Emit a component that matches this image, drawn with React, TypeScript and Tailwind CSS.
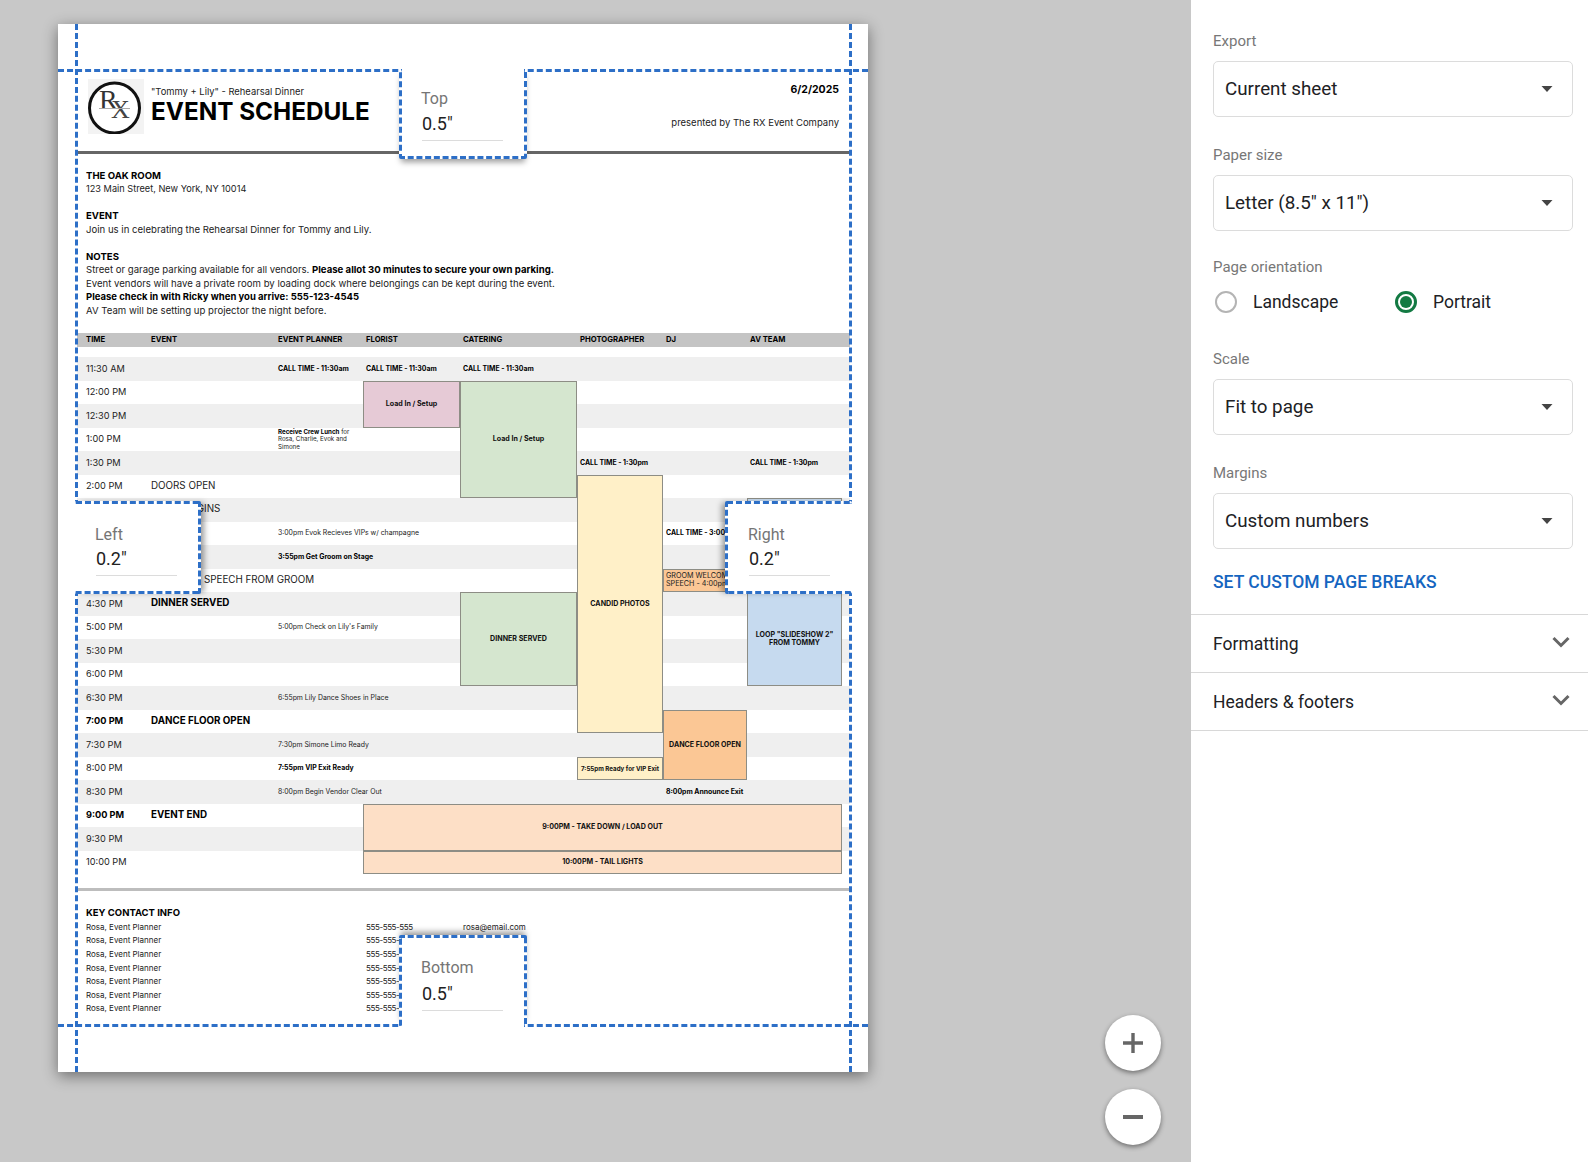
import { ReactNode } from "react";

// rows whose time label sits behind the Left margin box are left empty
const bands = [
  "11:30 AM", "12:00 PM", "12:30 PM", "1:00 PM", "1:30 PM", "2:00 PM", "", "", "", "", "4:30 PM",
  "5:00 PM", "5:30 PM", "6:00 PM", "6:30 PM", "7:00 PM", "7:30 PM", "8:00 PM", "8:30 PM", "9:00 PM", "9:30 PM", "10:00 PM",
];
const boldTimes = ["7:00 PM", "9:00 PM"];

const columns = ["TIME", "EVENT", "EVENT PLANNER", "FLORIST", "CATERING", "PHOTOGRAPHER", "DJ", "AV TEAM"];

// col is 1-based, rows are indexes into bands (end exclusive)
const events = [
  { row: 5, text: "DOORS OPEN", bold: false },
  { row: 6, text: "SHOW BEGINS", bold: false },
  { row: 9, text: "WELCOME SPEECH FROM GROOM", bold: false },
  { row: 10, text: "DINNER SERVED", bold: true },
  { row: 15, text: "DANCE FLOOR OPEN", bold: true },
  { row: 19, text: "EVENT END", bold: true },
];

const notes = [
  { row: 0, col: 3, text: "CALL TIME - 11:30am", bold: true },
  { row: 0, col: 4, text: "CALL TIME - 11:30am", bold: true },
  { row: 0, col: 5, text: "CALL TIME - 11:30am", bold: true },
  { row: 4, col: 6, text: "CALL TIME - 1:30pm", bold: true },
  { row: 4, col: 8, text: "CALL TIME - 1:30pm", bold: true },
  { row: 7, col: 3, text: "3:00pm Evok Recieves VIPs w/ champagne", bold: false },
  { row: 7, col: 7, text: "CALL TIME - 3:00pm", bold: true },
  { row: 8, col: 3, text: "3:55pm Get Groom on Stage", bold: true },
  { row: 11, col: 3, text: "5:00pm Check on Lily's Family", bold: false },
  { row: 14, col: 3, text: "6:55pm Lily Dance Shoes in Place", bold: false },
  { row: 16, col: 3, text: "7:30pm Simone Limo Ready", bold: false },
  { row: 17, col: 3, text: "7:55pm VIP Exit Ready", bold: true },
  { row: 18, col: 3, text: "8:00pm Begin Vendor Clear Out", bold: false },
  { row: 18, col: 7, text: "8:00pm Announce Exit", bold: true },
];

const blocks = [
  { col: 4, span: 1, from: 1, to: 3, bg: "bg-[#e6cad6]", text: "Load In / Setup" },
  { col: 5, span: 1, from: 1, to: 6, bg: "bg-[#d5e6cf]", text: "Load In / Setup" },
  { col: 5, span: 1, from: 10, to: 14, bg: "bg-[#d5e6cf]", text: "DINNER SERVED" },
  { col: 6, span: 1, from: 5, to: 16, bg: "bg-[#fff0c8]", text: "CANDID PHOTOS" },
  { col: 6, span: 1, from: 17, to: 18, bg: "bg-[#fff0c8]", text: "7:55pm Ready for VIP Exit", tiny: true },
  { col: 7, span: 1, from: 15, to: 18, bg: "bg-[#fbc795]", text: "DANCE FLOOR OPEN" },
  { col: 8, span: 1, from: 6, to: 10, bg: "bg-[#c6daef]", text: "" },
  { col: 8, span: 1, from: 10, to: 14, bg: "bg-[#c6daef]", text: 'LOOP "SLIDESHOW 2"\nFROM TOMMY' },
  { col: 4, span: 5, from: 19, to: 21, bg: "bg-[#fddfc6]", text: "9:00PM - TAKE DOWN / LOAD OUT" },
  { col: 4, span: 5, from: 21, to: 22, bg: "bg-[#fddfc6]", text: "10:00PM - TAIL LIGHTS" },
];

function Logo() {
  return (
    <div className="w-[56px] h-[55px] bg-[#f3f3f3] shrink-0">
      <svg width="56" height="55" viewBox="0 0 56 55">
        <circle cx="26.5" cy="29" r="25" fill="white" stroke="#111" strokeWidth="3" />
        <text x="11" y="30" fontFamily="Liberation Serif" fontSize="28" fill="#333">R</text>
        <text x="23" y="39" fontFamily="Liberation Serif" fontSize="26" fill="#444">X</text>
        <rect x="11" y="29" width="31" height="1" fill="#aaa" />
      </svg>
    </div>
  );
}

function MarginBox({ label, value, className, inner, valueGap }: { label: string; value: string; className: string; inner: string; valueGap: string }) {
  return (
    <div className={`absolute z-20 bg-white border-dashed border-[#2d6fc7] rounded-[2px] font-[Roboto,sans-serif] ${className}`}>
      <div className={`flex flex-col ${inner}`}>
        <span className="text-[16px] leading-[20px] text-[#757575]">{label}</span>
        <span className={`text-[18px] leading-[22px] pl-[1px] text-[#222] ${valueGap}`}>{value}</span>
        <div className="w-[81px] ml-[1px] mt-[5px] border-b border-[#dcdcdc]" />
      </div>
    </div>
  );
}

function Caret() {
  return (
    <svg width="12" height="6" viewBox="0 0 12 6" className="shrink-0">
      <polygon points="0.5,0 11.5,0 6,6" fill="#444" />
    </svg>
  );
}

function Field({ label, value, className }: { label: string; value: string; className: string }) {
  return (
    <div className={className}>
      <div className="text-[15px] leading-[20px] text-[#777]">{label}</div>
      <div className="mt-[10px] mr-[15px] h-[56px] flex items-center justify-between pl-[11px] pr-[19px] border-[1.5px] border-[#dcdcdc] rounded-[5px]">
        <span className="text-[18.8px] text-[#202124]">{value}</span>
        <Caret />
      </div>
    </div>
  );
}

function Radio({ label, checked, className }: { label: string; checked?: boolean; className: string }) {
  return (
    <div className={`flex items-center gap-[16px] ${className}`}>
      {checked ? (
        <span className="w-[22px] h-[22px] rounded-full border-[3px] border-[#137a43] flex items-center justify-center">
          <span className="w-[12px] h-[12px] rounded-full bg-[#137a43]" />
        </span>
      ) : (
        <span className="w-[22px] h-[22px] rounded-full border-[2px] border-[#b4b4b4]" />
      )}
      <span className="text-[17.5px] text-[#202124]">{label}</span>
    </div>
  );
}

function Row({ label }: { label: string }) {
  return (
    <div className="h-[58px] pl-[22px] pr-[18px] flex items-center justify-between border-b-[1.5px] border-[#d8d8d8]">
      <span className="text-[17.5px] text-[#202124] pt-[1px]">{label}</span>
      <svg width="18" height="12" viewBox="0 0 18 12" fill="none" stroke="#666" strokeWidth="3" className="mb-[3px]">
        <path d="M1.5 2 L9 9.5 L16.5 2" />
      </svg>
    </div>
  );
}

function InfoLine({ children, bold }: { children: ReactNode; bold?: boolean }) {
  return <div className={`h-[13.4px] leading-[13.4px] ${bold ? "font-bold text-black" : ""}`}>{children}</div>;
}

function Schedule() {
  return (
    <div className="grid grid-cols-[71px_127px_88px_97px_117px_86px_84px_95px_8px] grid-rows-[repeat(22,23.5px)] mt-[10.5px] text-[#222]">
      {bands.map((t, i) => (
        <div
          key={i}
          className={`col-span-9 col-start-1 flex items-center pl-[9px] text-[9.2px] whitespace-nowrap ${i % 2 === 0 ? "bg-[#efefef]" : ""} ${boldTimes.includes(t) ? "font-bold text-black" : ""}`}
          style={{ gridRow: i + 1 }}
        >
          {t}
        </div>
      ))}
      {events.map((e) => (
        <div
          key={e.text}
          className={`col-start-2 flex items-center pl-[3px] text-[9.8px] whitespace-nowrap ${e.bold ? "font-bold text-black" : ""}`}
          style={{ gridRow: e.row + 1 }}
        >
          {e.text}
        </div>
      ))}
      {notes.map((n) => (
        <div
          key={`${n.row}-${n.col}`}
          className={`flex items-center pl-[3px] text-[6.9px] whitespace-nowrap ${n.bold ? "font-bold text-black" : ""}`}
          style={{ gridRow: n.row + 1, gridColumn: n.col }}
        >
          {n.text}
        </div>
      ))}
      <div className="col-start-3 flex items-center pl-[3px] text-[6.2px] leading-[7.6px] w-[88px]" style={{ gridRow: 4 }}>
        <span>
          <b className="text-black">Receive Crew Lunch</b> for Rosa, Charlie, Evok and Simone
        </span>
      </div>
      <div className="col-start-7 z-10 flex flex-col justify-center bg-[#fbc795] border border-[#8d8d85] pl-[2px] text-[7.2px] leading-[8px] whitespace-nowrap overflow-hidden" style={{ gridRow: 10 }}>
        <span>GROOM WELCOME</span>
        <span>SPEECH - 4:00pm</span>
      </div>
      {blocks.map((b) => (
        <div
          key={`${b.col}-${b.from}`}
          className={`z-10 flex items-center justify-center text-center font-bold text-[#111] border border-[#8d8d85] whitespace-pre-line ${b.bg} ${b.tiny ? "text-[6.2px]" : "text-[7.1px] leading-[8px]"}`}
          style={{ gridRow: `${b.from + 1} / ${b.to + 1}`, gridColumn: `${b.col} / span ${b.span}` }}
        >
          {b.text}
        </div>
      ))}
    </div>
  );
}

export default function App() {
  return (
    <div className="w-[1588px] h-[1162px] flex overflow-hidden bg-[#c8c8c8] font-[Inter,sans-serif]">
      <main className="relative w-[1191px] pl-[58px] pt-[24px]">
        {/* Sheet preview */}
        <div className="relative w-[810px] h-[1048px] bg-white shadow-[0_4px_14px_rgba(0,0,0,0.45)] overflow-hidden">
          <div className="pl-[19px] pr-[18px] pt-[55px]">
            <div className="flex h-[71.5px] border-b-[3px] border-[#666] box-content pl-[11px] pr-[11px]">
              <Logo />
              <div className="ml-[7px] flex flex-col">
                <span className="mt-[6px] text-[9.4px] leading-[14px] text-[#222]">"Tommy + Lily" - Rehearsal Dinner</span>
                <span className="text-[24.3px] leading-[25px] font-bold text-black">EVENT SCHEDULE</span>
              </div>
              <div className="ml-auto flex flex-col items-end">
                <span className="mt-[4px] text-[10.5px] leading-[14px] font-bold text-black">6/2/2025</span>
                <span className="mt-[19px] text-[9.5px] leading-[14px] text-[#222]">presented by The RX Event Company</span>
              </div>
            </div>

            <div className="pl-[9px] pt-[15px] text-[9.6px] text-[#222]">
              <InfoLine bold>THE OAK ROOM</InfoLine>
              <InfoLine><span className="text-[9.2px]">123 Main Street, New York, NY 10014</span></InfoLine>
              <div className="h-[14px]" />
              <InfoLine bold>EVENT</InfoLine>
              <InfoLine>Join us in celebrating the Rehearsal Dinner for Tommy and Lily.</InfoLine>
              <div className="h-[14px]" />
              <InfoLine bold>NOTES</InfoLine>
              <InfoLine>
                Street or garage parking available for all vendors. <b className="text-black">Please allot 30 minutes to secure your own parking.</b>
              </InfoLine>
              <InfoLine>Event vendors will have a private room by loading dock where belongings can be kept during the event.</InfoLine>
              <InfoLine bold><span className="text-[9.5px]">Please check in with Ricky when you arrive: 555-123-4545</span></InfoLine>
              <InfoLine>AV Team will be setting up projector the night before.</InfoLine>
            </div>

            <div className="mt-[15.5px] h-[14px] bg-[#c4c4c4] grid grid-cols-[71px_127px_88px_97px_117px_86px_84px_95px_8px] items-center text-[7.7px] font-bold text-black">
              {columns.map((c, i) => (
                <span key={c} className={i === 0 ? "pl-[9px]" : "pl-[3px] whitespace-nowrap"}>{c}</span>
              ))}
            </div>

            <Schedule />

            <div className="mt-[13.5px] border-b-[3px] border-[#bdbdbd]" />

            <div className="pl-[9px] pt-[15px] text-[8px] text-[#222]">
              <div className="text-[9.5px] leading-[13px] font-bold text-black">KEY CONTACT INFO</div>
              <div className="mt-[1.5px]">
                {[0, 1, 2, 3, 4, 5, 6].map((i) => (
                  <div key={i} className="h-[13.6px] flex items-center">
                    <span className="w-[280px]">Rosa, Event Planner</span>
                    <span className="w-[97px] tracking-[-0.4px]">555-555-555</span>
                    {i === 0 && <span>rosa@email.com</span>}
                  </div>
                ))}
              </div>
            </div>
          </div>

          {/* margin guides */}
          <div className="absolute left-0 top-[45px] w-full border-t-[3px] border-dashed border-[#2d6fc7]" />
          <div className="absolute left-0 top-[1000px] w-full border-t-[3px] border-dashed border-[#2d6fc7]" />
          <div className="absolute left-[17px] top-0 h-full border-l-[3px] border-dashed border-[#2d6fc7]" />
          <div className="absolute left-[791px] top-0 h-full border-l-[3px] border-dashed border-[#2d6fc7]" />

          <MarginBox label="Top" value='0.5"' valueGap="mt-[4px]" className="left-[341px] top-[45px] w-[128px] h-[90px] border-x-[3px] border-b-[3px] shadow-[0_5px_6px_-2px_rgba(0,0,0,0.4)]" inner="pl-[19px] pt-[20px]" />
          <MarginBox label="Bottom" value='0.5"' valueGap="mt-[5px]" className="left-[341px] top-[911px] w-[128px] h-[92px] border-x-[3px] border-t-[3px] shadow-[0_-5px_6px_-2px_rgba(0,0,0,0.4)]" inner="pl-[19px] pt-[20px]" />
          <MarginBox label="Left" value='0.2"' valueGap="mt-[3px]" className="left-[16px] top-[477px] w-[127px] h-[93px] border-y-[3px] border-r-[3px] shadow-[5px_0_6px_-2px_rgba(0,0,0,0.4)]" inner="pl-[21px] pt-[21px]" />
          <MarginBox label="Right" value='0.2"' valueGap="mt-[3px]" className="left-[667px] top-[477px] w-[127px] h-[93px] border-y-[3px] border-l-[3px] shadow-[-5px_0_6px_-2px_rgba(0,0,0,0.4)]" inner="pl-[20px] pt-[21px]" />
        </div>

        {/* zoom buttons */}
        <div className="absolute left-[1105px] top-[1015px] flex flex-col gap-[18px]">
          <button className="w-[56px] h-[56px] rounded-full bg-white shadow-[0_2px_5px_rgba(0,0,0,0.45)] flex items-center justify-center">
            <svg width="20" height="20" viewBox="0 0 20 20" fill="#666"><path d="M8.3 0h3.4v8.3H20v3.4h-8.3V20H8.3v-8.3H0V8.3h8.3z" /></svg>
          </button>
          <button className="w-[56px] h-[56px] rounded-full bg-white shadow-[0_2px_5px_rgba(0,0,0,0.45)] flex items-center justify-center">
            <svg width="20" height="4" viewBox="0 0 20 4" fill="#666"><rect width="20" height="4" /></svg>
          </button>
        </div>
      </main>

      <aside className="w-[397px] h-full bg-white font-[Roboto,sans-serif]">
        <div className="pl-[22px] pt-[31px]">
          <Field label="Export" value="Current sheet" className="" />
          <Field label="Paper size" value="Letter (8.5&quot; x 11&quot;)" className="mt-[28px]" />
          <div className="mt-[26px] text-[15px] leading-[20px] text-[#777]">Page orientation</div>
          <div className="flex mt-[13px] h-[24px]">
            <Radio label="Landscape" className="ml-[2px] w-[180px]" />
            <Radio label="Portrait" checked className="" />
          </div>
          <Field label="Scale" value="Fit to page" className="mt-[35px]" />
          <Field label="Margins" value="Custom numbers" className="mt-[28px]" />
          <div className="mt-[22px] h-[22px] text-[17.5px] leading-[22px] font-medium text-[#1565c0]">SET CUSTOM PAGE BREAKS</div>
        </div>
        <div className="mt-[21px] border-t-[1.5px] border-[#d8d8d8]">
          <Row label="Formatting" />
          <Row label="Headers & footers" />
        </div>
      </aside>
    </div>
  );
}
